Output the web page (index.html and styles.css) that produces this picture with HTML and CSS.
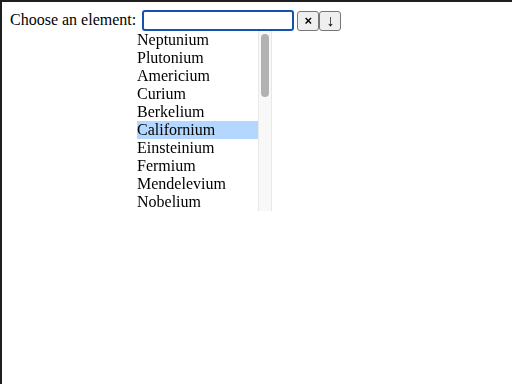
FILE: index.html
```html
<!DOCTYPE html>
<html lang="en">
  <head>
    <meta charset="UTF-8" />
    <meta name="viewport" content="width=device-width, initial-scale=1.0" />
    <title>Combobox</title>
    <link rel="stylesheet" href="styles.css">
  </head>

  <body>
    <div class="combo">
      <div class="row">
        <label for="cb">Choose an element:</label>
        <input id="cb" type="text" autofocus><button class="btn clear" type="button">×</button><button class="btn open" type="button">↓</button>
      </div>
      <div class="popup">
        <ul class="listbox" role="listbox">
          <li>Neptunium</li>
          <li>Plutonium</li>
          <li>Americium</li>
          <li>Curium</li>
          <li>Berkelium</li>
          <li class="active">Californium</li>
          <li>Einsteinium</li>
          <li>Fermium</li>
          <li>Mendelevium</li>
          <li>Nobelium</li>
        </ul>
        <div class="scrollbar"><div class="thumb"></div></div>
      </div>
    </div>
  </body>
</html>
```

FILE: styles.css
```css
html {
  border-top: 2px solid #1e1e1e;
  border-left: 2px solid #1e1e1e;
  min-height: 100%;
  box-sizing: border-box;
}

body {
  margin: 8px;
  font-family: "Liberation Serif", "Times New Roman", serif;
  font-size: 16px;
  color: #000;
}

.row {
  line-height: 20px;
  height: 21px;
}

.row input {
  width: 152px;
  height: 21px;
  box-sizing: border-box;
  margin: 0 0 0 2px;
  border: 2px solid #1552b0;
  border-radius: 3px;
  padding: 1px 2px;
  font-size: 13px;
  outline: none;
  vertical-align: top;
}

.btn {
  width: 22px;
  height: 20px;
  box-sizing: border-box;
  margin: 1px 0 0 0;
  padding: 0;
  border: 1px solid #767676;
  border-radius: 3px;
  background: #efefef;
  font-family: "Liberation Sans", Arial, sans-serif;
  font-size: 13px;
  line-height: 16px;
  color: #000;
  vertical-align: top;
}

.btn.clear {
  margin-left: 3px;
  font-weight: bold;
}

.btn.open {
  font-size: 16px;
}

.popup {
  margin-left: 127px;
  width: 135px;
  height: 180px;
  display: flex;
  background: #fff;
}

.listbox {
  flex: 1;
  margin: 0;
  padding: 0;
  list-style: none;
  overflow: hidden;
  line-height: 18px;
}

.listbox .active {
  background: #b3d7fe;
}

.scrollbar {
  width: 14px;
  padding: 3px 2px;
  box-sizing: border-box;
  background: #f8f8f8;
  border-left: 1px solid #e8e8e8;
  border-right: 1px solid #e8e8e8;
}

.thumb {
  height: 63px;
  border-radius: 4px;
  background: #b2b2b2;
}
```
